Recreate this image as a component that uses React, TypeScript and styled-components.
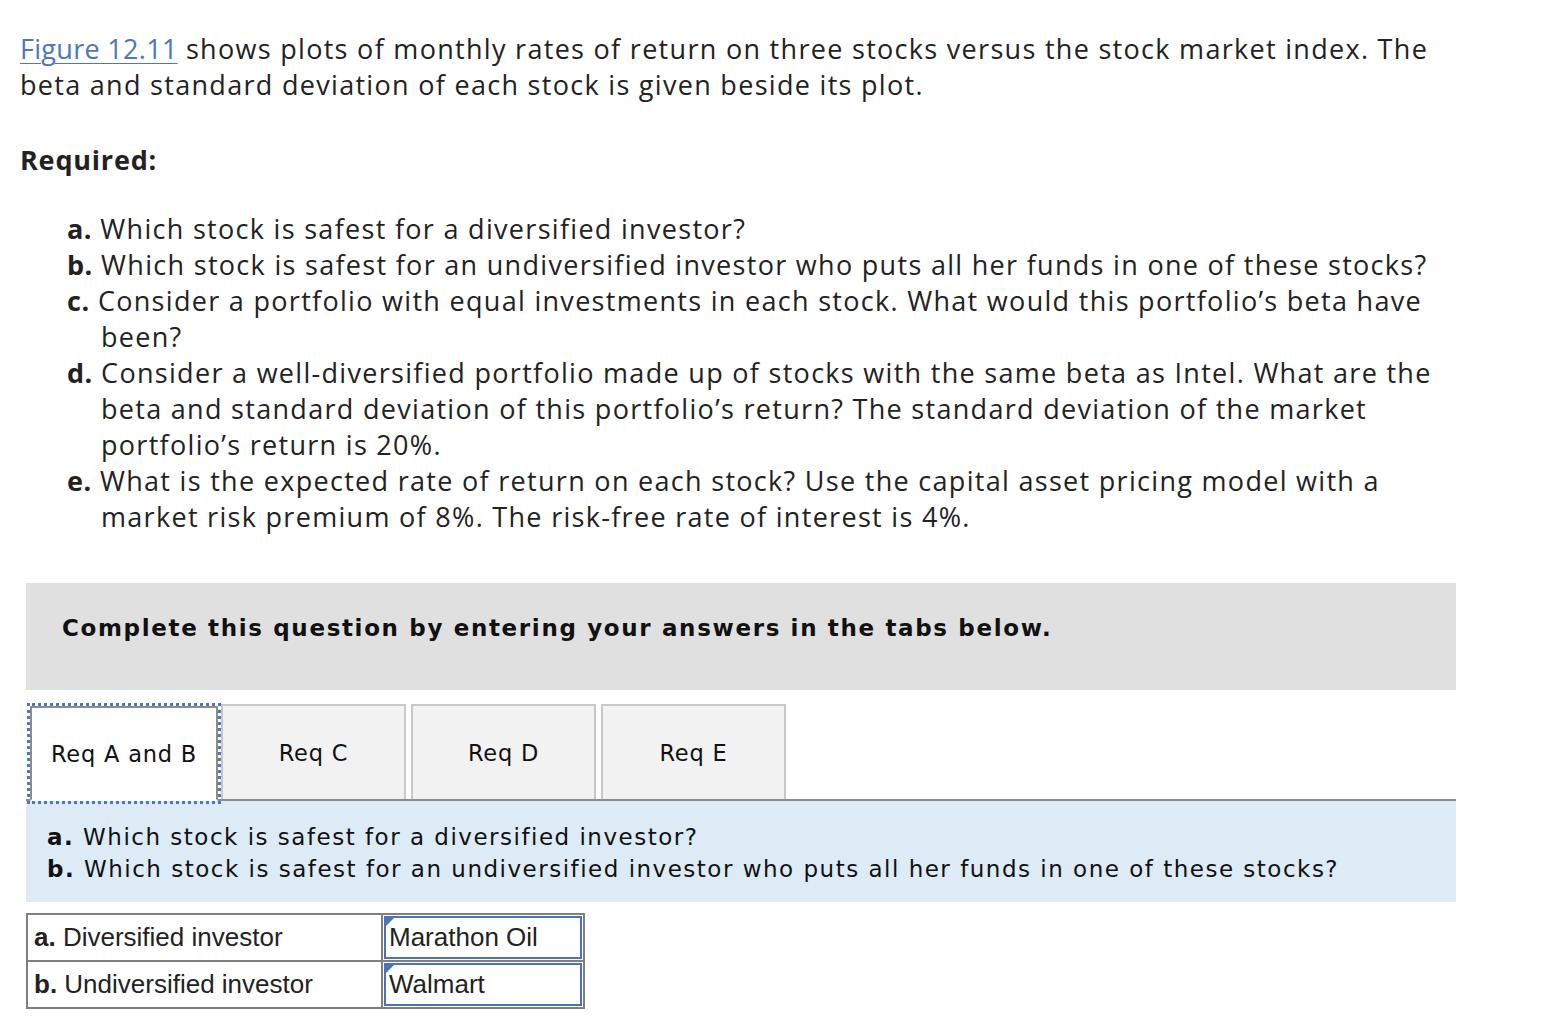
import styled, { createGlobalStyle } from 'styled-components';

const GlobalStyle = createGlobalStyle`
   body{
      margin: 0;
      background: #fff;
   }
`;

const Page = styled.div`
   padding: 31px 88px 0 20px;
   font-family: "Open Sans", "Liberation Sans", sans-serif;
   color: #222;
`;

const Intro = styled.p`
   margin: 0;
   font-size: 27px;
   line-height: 36px;
   letter-spacing: 1.3px;

   a{
      color: #4a77bd;
      letter-spacing: 0.3px;
      text-decoration: underline;
      text-decoration-thickness: 1px;
      text-underline-offset: 4px;
   }
`;

const Heading = styled.h3`
   margin: 39px 0 0;
   font-size: 27px;
   line-height: 36px;
   letter-spacing: 0.8px;
   font-weight: 700;
`;

const List = styled.ol`
   list-style: none;
   margin: 33px 0 0;
   padding: 0 0 0 81px;
   font-size: 27px;
   line-height: 36px;
   letter-spacing: 1.3px;
`;

const Item = styled.li`
   text-indent: -34px;

   b{ font-weight: 700; letter-spacing: 0.5px; }
`;

const Prompt = styled.div`
   margin: 48px 0 0 6px;
   background: #e0e0e0;
   padding: 24px 36px 41px;
   font-family: "DejaVu Sans", Verdana, sans-serif;
   font-weight: 700;
   font-size: 23px;
   line-height: 42px;
   letter-spacing: 1.65px;
   color: #111;
`;

const Tabs = styled.div`
   display: flex;
   margin: 14px 0 0 6px;
   padding-left: 4px;
   border-bottom: 2px solid #8c8c8c;
   align-items: flex-end;
`;

const Tab = styled.button<{ $active?: boolean }>`
   width: ${p => p.$active ? 188 : 185}px;
   height: 95px;
   margin: 0 ${p => p.$active ? 3 : 5}px ${p => p.$active ? -2 : 0}px 0;
   background: ${p => p.$active ? '#fff' : '#f2f2f2'};
   border: 2px solid ${p => p.$active ? '#8c8c8c' : '#c8c8c8'};
   border-bottom: ${p => p.$active ? '2px solid #fff' : 'none'};
   outline: ${p => p.$active ? '3px dotted #4a77bd' : 'none'};
   outline-offset: 0;
   font-family: "DejaVu Sans", Verdana, sans-serif;
   font-size: 22.5px;
   letter-spacing: 0.8px;
   color: #111;
   padding: 0;
   cursor: pointer;
`;

const Question = styled.div`
   margin: 0 0 0 6px;
   background: #ddebf7;
   padding: 20px 21px 17px;
   font-family: "DejaVu Sans", Verdana, sans-serif;
   font-size: 23px;
   line-height: 32px;
   letter-spacing: 1.5px;
   color: #111;

   b{ font-weight: 700; }
`;

const AnswerTable = styled.table`
   margin: 11px 0 0 6px;
   border-collapse: collapse;
   font-family: "Liberation Sans", Arial, sans-serif;
   font-size: 26px;
   color: #222;
`;

const LabelCell = styled.td`
   width: 347px;
   height: 43px;
   border: 2px solid #7f7f7f;
   padding: 0 0 0 6px;

   b{ font-weight: 700; }
`;

const InputCell = styled.td`
   width: 200px;
   padding: 0;
   border: 2px solid #7f7f7f;
`;

const Answer = styled.div`
   height: 39px;
   margin: 1px;
   border: 2px solid #4a72b5;
   padding: 0 3px;
   display: flex;
   align-items: center;
   font-family: "Liberation Sans", Arial, sans-serif;
   font-size: 26px;
   color: #222;
   position: relative;

   &::before{
      content: '';
      position: absolute;
      left: 0;
      top: 0;
      border-left: 8px solid #4a72b5;
      border-bottom: 8px solid transparent;
   }
`;

const tabs = ['Req A and B', 'Req C', 'Req D', 'Req E'];

export default function App() {
   return (
      <>
         <GlobalStyle />
         <Page>
            <Intro>
               <a href="#">Figure 12.11</a> shows plots of monthly rates of return on three stocks versus the stock market index. The beta and standard deviation of each stock is given beside its plot.
            </Intro>
            <Heading>Required:</Heading>
            <List>
               <Item><b>a.</b> Which stock is safest for a diversified investor?</Item>
               <Item><b>b.</b> Which stock is safest for an undiversified investor who puts all her funds in one of these stocks?</Item>
               <Item><b>c.</b> Consider a portfolio with equal investments in each stock. What would this portfolio’s beta have been?</Item>
               <Item><b>d.</b> Consider a well-diversified portfolio made up of stocks with the same beta as Intel. What are the beta and standard deviation of this portfolio’s return? The standard deviation of the market portfolio’s return is 20%.</Item>
               <Item><b>e.</b> What is the expected rate of return on each stock? Use the capital asset pricing model with a market risk premium of 8%. The risk-free rate of interest is 4%.</Item>
            </List>
            <Prompt>Complete this question by entering your answers in the tabs below.</Prompt>
            <Tabs>
               {tabs.map((t, i) => <Tab key={t} $active={i === 0}>{t}</Tab>)}
            </Tabs>
            <Question>
               <b>a.</b> Which stock is safest for a diversified investor?<br />
               <b>b.</b> Which stock is safest for an undiversified investor who puts all her funds in one of these stocks?
            </Question>
            <AnswerTable>
               <tbody>
                  <tr>
                     <LabelCell><b>a.</b> Diversified investor</LabelCell>
                     <InputCell><Answer>Marathon Oil</Answer></InputCell>
                  </tr>
                  <tr>
                     <LabelCell><b>b.</b> Undiversified investor</LabelCell>
                     <InputCell><Answer>Walmart</Answer></InputCell>
                  </tr>
               </tbody>
            </AnswerTable>
         </Page>
      </>
   );
}
